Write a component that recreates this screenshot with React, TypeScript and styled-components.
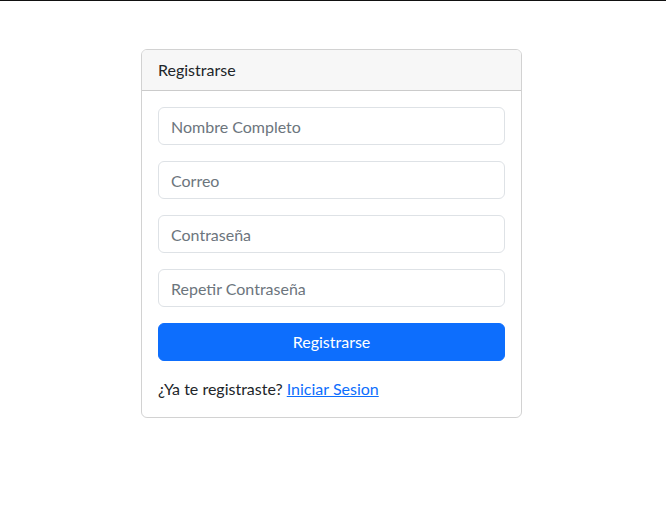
import React, { FC } from 'react';
import styled, { createGlobalStyle } from 'styled-components';

const GlobalStyle = createGlobalStyle`
  *, *::before, *::after {
    box-sizing: border-box;
  }

  body {
    margin: 0;
    background: #fff;
    color: #212529;
    font-family: Lato, "Open Sans", sans-serif;
    font-size: 16px;
    line-height: 1.5;
  }
`;

const TopRule = styled.div`
  border-top: 1px solid #111;
`;

const Page = styled.main`
  display: flex;
  justify-content: center;
  padding-top: 48px;
`;

const Card = styled.section`
  border: 1px solid rgba(0, 0, 0, 0.175);
  border-radius: 6px;
  display: flex;
  flex-direction: column;
  margin-left: -3px;
  width: 381px;
`;

const CardHeader = styled.header`
  background-color: #f7f7f7;
  border-bottom: 1px solid rgba(0, 0, 0, 0.175);
  border-radius: 5px 5px 0 0;
  padding: 8px 16px;
`;

const Form = styled.form`
  display: flex;
  flex-direction: column;
  gap: 16px;
  padding: 16px;
`;

const Input = styled.input`
  border: 1px solid #dee2e6;
  border-radius: 6px;
  color: #212529;
  font-family: inherit;
  font-size: 16px;
  height: 38px;
  line-height: 1.5;
  padding: 6px 12px;
  width: 100%;

  &::placeholder {
    color: #6c757d;
  }
`;

const Button = styled.button`
  background-color: #0d6efd;
  border: 1px solid #0d6efd;
  border-radius: 6px;
  color: #fff;
  cursor: pointer;
  font-family: inherit;
  font-size: 16px;
  height: 38px;
  line-height: 1.5;
  padding: 6px 12px;
  width: 100%;
`;

const Footnote = styled.p`
  margin: 0;
`;

const FootLink = styled.a`
  color: #0d6efd;
  text-decoration: underline;
`;

const fields = ['Nombre Completo', 'Correo', 'Contraseña', 'Repetir Contraseña'];

const App: FC = () => (
  <>
    <GlobalStyle />
    <TopRule />
    <Page>
      <Card>
        <CardHeader>Registrarse</CardHeader>
        <Form onSubmit={(e) => e.preventDefault()}>
          {fields.map((f) => (
            <Input
              key={f}
              placeholder={f}
              type={f.includes('Contraseña') ? 'password' : 'text'}
            />
          ))}
          <Button type="submit">Registrarse</Button>
          <Footnote>
            ¿Ya te registraste? <FootLink href="#">Iniciar Sesion</FootLink>
          </Footnote>
        </Form>
      </Card>
    </Page>
  </>
);

export default App;
